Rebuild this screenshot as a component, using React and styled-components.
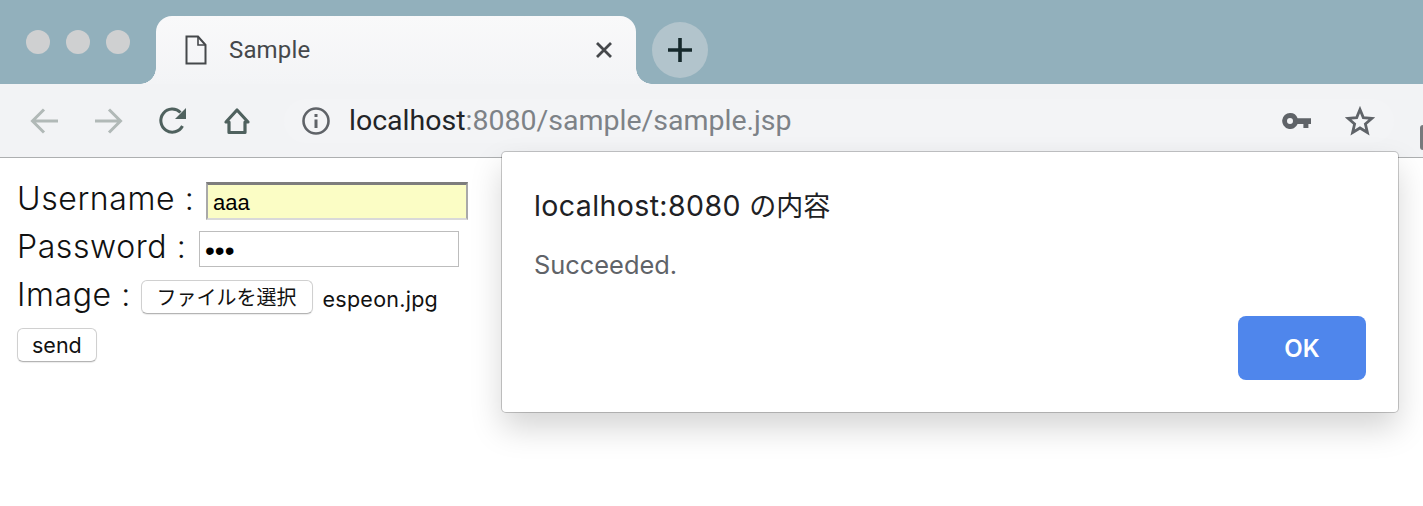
import React from 'react';
import styled, { createGlobalStyle } from 'styled-components';

const GlobalStyle = createGlobalStyle`
  html, body { margin: 0; padding: 0; background: #fff; }
  body { width: 1423px; height: 506px; overflow: hidden; font-family: "Liberation Sans", Arial, sans-serif; }
`;

const Page = styled.div`
  position: relative;
  width: 1423px;
  height: 506px;
  overflow: hidden;
  background: #fff;
`;

const TabStrip = styled.div`
  height: 84px;
  background: #92b0bc;
  display: flex;
  align-items: flex-end;
`;

const Lights = styled.div`
  width: 156px;
  height: 84px;
  padding: 30px 0 0 26px;
  box-sizing: border-box;
  display: flex;
  gap: 16px;
  align-items: flex-start;
`;

const Light = styled.span`
  width: 24px;
  height: 24px;
  border-radius: 50%;
  background: #cfd0d1;
`;

const Tab = styled.div`
  position: relative;
  width: 480px;
  height: 68px;
  background: linear-gradient(#f9f9fa, #f3f4f6);
  border-radius: 16px 16px 0 0;
  display: flex;
  align-items: center;
  padding: 0 22px 0 29px;
  box-sizing: border-box;
  color: #45484b;

  &::before, &::after {
    content: '';
    position: absolute;
    bottom: 0;
    width: 16px;
    height: 16px;
  }
  &::before {
    left: -16px;
    background: radial-gradient(circle at 0 0, #92b0bc 15.5px, #f3f4f6 16px);
  }
  &::after {
    right: -16px;
    background: radial-gradient(circle at 100% 0, #92b0bc 15.5px, #f3f4f6 16px);
  }
`;

const TabTitle = styled.span`
  flex: 1;
  margin-left: 22px;
  font-family: Roboto, "Liberation Sans", sans-serif;
  font-size: 24px;
  letter-spacing: 0.15px;
`;

const NewTab = styled.div`
  width: 56px;
  height: 56px;
  border-radius: 50%;
  background: #b2c4cc;
  margin: 0 0 6px 16px;
  display: flex;
  align-items: center;
  justify-content: center;
`;

const Toolbar = styled.div`
  height: 73px;
  background: #f2f3f5;
  border-bottom: 1px solid #adafb0;
  display: flex;
  align-items: center;
  padding-left: 29px;
`;

const NavIcon = styled.svg`
  width: 32px;
  height: 32px;
  margin-right: ${(p) => p.$gap}px;
  flex: none;
`;

const Omnibox = styled.div`
  width: 1110px;
  height: 44px;
  margin-left: 31px;
  border-radius: 22px;
  background: #f3f4f6;
  display: flex;
  align-items: center;
  padding: 0 19px 0 17px;
  box-sizing: border-box;
`;

const Url = styled.div`
  flex: 1;
  margin-left: 18px;
  font-family: Roboto, "Liberation Sans", sans-serif;
  font-size: 28.5px;
  color: #7d8287;
  white-space: nowrap;
`;

const Host = styled.span`
  color: #222427;
`;

const KeyIcon = styled.svg`
  margin-right: 33px;
`;

const EdgeIcon = styled.div`
  position: absolute;
  left: 1420px;
  top: 125px;
  width: 12px;
  height: 25px;
  border-radius: 3px;
  background: #77797c;
`;

const Form = styled.form`
  padding: 19px 0 0 17px;
  font-family: Inter, "Liberation Sans", sans-serif;
  font-weight: 300;
  font-size: 32px;
  letter-spacing: 0.6px;
  color: #111;
  display: flex;
  flex-direction: column;
`;

const Row = styled.div`
  height: 48px;
  display: flex;
  align-items: center;
`;

const Label = styled.label`
  white-space: pre;
  margin-bottom: 5px;
`;

const TextBox = styled.div`
  width: ${(p) => p.$width}px;
  height: ${(p) => (p.$filled ? 38 : 36)}px;
  margin-left: ${(p) => p.$left}px;
  box-sizing: border-box;
  padding: 3px 0 0 5px;
  display: flex;
  align-items: center;
  font-family: "Liberation Sans", sans-serif;
  font-weight: 400;
  font-size: 22px;
  letter-spacing: 0;
  color: #000;
  background: ${(p) => (p.$filled ? '#fbfdc5' : '#fff')};
  border: 1px solid #bdbdbd;
  ${(p) => p.$filled && `
    border-width: 3px 2px 2px 2px;
    border-color: #7d7d7d #a9a9a9 #d9d9d9 #a9a9a9;
  `}
`;

const Dots = styled.span`
  font-size: 28px;
  line-height: 1;
`;

const Button = styled.button`
  height: 34px;
  padding: 2px ${(p) => p.$pad}px 0;
  background: #fff;
  border: 1px solid #d0d0d0;
  border-bottom-color: #b4b4b4;
  border-radius: 6px;
  box-shadow: 0 1px 1px rgba(0, 0, 0, 0.08);
  font-family: Inter, "Noto Sans CJK JP", sans-serif;
  font-weight: 400;
  font-size: ${(p) => p.$size}px;
  line-height: 1;
  color: #111;
  white-space: nowrap;
`;

const FileName = styled.span`
  margin: 3px 0 0 10px;
  font-family: Inter, "Liberation Sans", sans-serif;
  font-weight: 400;
  font-size: 21.5px;
  letter-spacing: 0.25px;
  color: #111;
`;

const Dialog = styled.div`
  position: absolute;
  left: 502px;
  top: 152px;
  width: 896px;
  height: 260px;
  box-sizing: border-box;
  padding: 36px 32px 32px;
  background: #fff;
  border-radius: 4px;
  box-shadow: 0 0 0 1px rgba(0, 0, 0, 0.2), 0 16px 32px rgba(0, 0, 0, 0.17);
  display: flex;
  flex-direction: column;
`;

const DialogTitle = styled.div`
  font-family: Inter, "Noto Sans CJK JP", sans-serif;
  font-size: 28.5px;
  letter-spacing: 0.4px;
  line-height: 36px;
  color: #202124;
`;

const TitleSuffix = styled.span`
  font-size: 27px;
  letter-spacing: 0;
`;

const DialogText = styled.div`
  margin-top: 24px;
  font-family: Inter, "Liberation Sans", sans-serif;
  font-size: 25.4px;
  line-height: 32px;
  color: #5f6368;
`;

const OkButton = styled.button`
  align-self: flex-end;
  margin-top: auto;
  width: 128px;
  height: 64px;
  border: none;
  border-radius: 8px;
  background: #4f86ec;
  color: #fff;
  font-family: Inter, "Liberation Sans", sans-serif;
  font-weight: 600;
  font-size: 24px;
`;

export default function App() {
  return (
    <Page>
      <GlobalStyle />
      <TabStrip>
        <Lights>
          <Light />
          <Light />
          <Light />
        </Lights>
        <Tab>
          <svg width="22" height="30" viewBox="0 0 22 30" fill="none" stroke="#45484b" strokeWidth="2">
            <path d="M1.5 1.5H13L20.5 10V28.5H1.5Z" />
            <path d="M13 1.5V10H20.5" strokeWidth="1.6" />
          </svg>
          <TabTitle>Sample</TabTitle>
          <svg width="20" height="20" viewBox="0 0 20 20" stroke="#45484b" strokeWidth="2.8">
            <path d="M3 3L17 17M17 3L3 17" />
          </svg>
        </Tab>
        <NewTab>
          <svg width="26" height="26" viewBox="0 0 26 26" stroke="#16292c" strokeWidth="3.6">
            <path d="M13 1V25M1 13H25" />
          </svg>
        </NewTab>
      </TabStrip>
      <Toolbar>
        <NavIcon $gap={31} viewBox="0 0 32 32" fill="none" stroke="#b1b9b7" strokeWidth="3">
          <path d="M29 16H4M15 4.5L3.5 16L15 27.5" />
        </NavIcon>
        <NavIcon $gap={33} viewBox="0 0 32 32" fill="none" stroke="#b1b9b7" strokeWidth="3">
          <path d="M3 16H28M17 4.5L28.5 16L17 27.5" />
        </NavIcon>
        <NavIcon $gap={32} viewBox="0 0 32 32" fill="none">
          <path d="M25.5 21A11.5 11.5 0 1 1 23.5 7.5" stroke="#4f615e" strokeWidth="3" />
          <path d="M29 3V14H18Z" fill="#4f615e" />
        </NavIcon>
        <NavIcon $gap={0} viewBox="0 0 32 32" fill="none" stroke="#4f615e" strokeWidth="3.2">
          <path d="M8 17V27.5H24V17H27L16 5L5 17Z" strokeLinejoin="round" />
        </NavIcon>
        <Omnibox>
          <svg width="30" height="30" viewBox="0 0 30 30" fill="none" stroke="#5f6368">
            <circle cx="15" cy="15" r="12.5" strokeWidth="2.6" />
            <path d="M15 13.5V22" strokeWidth="3" />
            <path d="M15 8V11" strokeWidth="3" />
          </svg>
          <Url><Host>localhost</Host>:8080/sample/sample.jsp</Url>
          <KeyIcon width="30" height="16" viewBox="0 0 30 16" fill="#5f6368">
            <path d="M8 0a8 8 0 0 1 7.6 5.2H29V11h-2.6v4h-5v-4h-5.8A8 8 0 1 1 8 0Zm0 5a3 3 0 1 0 0 6 3 3 0 0 0 0-6Z" fillRule="evenodd" />
          </KeyIcon>
          <svg width="30" height="30" viewBox="0 0 30 30" fill="none" stroke="#5f6368" strokeWidth="2.8">
            <path d="M15 3.5L18.3 11.6L27 12.3L20.4 18L22.4 26.5L15 22L7.6 26.5L9.6 18L3 12.3L11.7 11.6Z" />
          </svg>
        </Omnibox>
      </Toolbar>
      <EdgeIcon />
      <Form>
        <Row>
          <Label>Username : </Label>
          <TextBox $filled $width={262} $left={2}>aaa</TextBox>
        </Row>
        <Row>
          <Label>Password : </Label>
          <TextBox $width={260} $left={3}><Dots>•••</Dots></TextBox>
        </Row>
        <Row>
          <Label>Image : </Label>
          <Button type="button" $pad={15} $size={20}>ファイルを選択</Button>
          <FileName>espeon.jpg</FileName>
        </Row>
        <Row>
          <Button type="button" $pad={14} $size={21.5}>send</Button>
        </Row>
      </Form>
      <Dialog>
        <DialogTitle>localhost:8080 <TitleSuffix>の内容</TitleSuffix></DialogTitle>
        <DialogText>Succeeded.</DialogText>
        <OkButton type="button">OK</OkButton>
      </Dialog>
    </Page>
  );
}
